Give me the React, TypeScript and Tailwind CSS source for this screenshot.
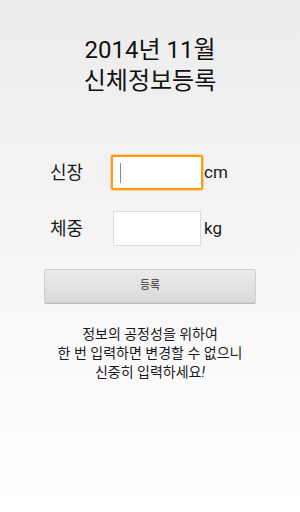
import { useState } from "react";

const font = { fontFamily: 'Roboto, "Noto Sans CJK KR", sans-serif' };

export default function App() {
  const [height, setHeight] = useState("");
  const [weight, setWeight] = useState("");

  return (
    <div
      className="w-[300px] h-[512px] overflow-hidden bg-gradient-to-b from-[#ececec] via-[#f6f6f6] to-white text-[#1a1a1a] flex flex-col items-center"
      style={font}
    >
      <div className="mt-[35px] text-center text-[24px] leading-[31px] text-[#111]">
        <p>2014년 11월</p>
        <p>신체정보등록</p>
      </div>

      <div className="mt-[58px] w-full pl-[50px] flex flex-col gap-[21px]">
        <div className="flex items-center h-[35px]">
          <span className="w-[61px] text-[18px]">신장</span>
          <div className="w-[92px] h-[35px] rounded-[2px] border-2 border-[#ff9a12] shadow-[0_0_0_1px_#ffd49a] bg-white flex items-center pl-[7px] gap-0">
            {/* static text cursor, as in the focused field */}
            {height === "" && <span className="w-px h-[20px] bg-[#8a8a8a] shrink-0" />}
            <input
              value={height}
              onChange={(e) => setHeight(e.target.value)}
              className="w-full outline-none bg-transparent text-[15px] caret-transparent"
            />
          </div>
          <span className="ml-px text-[17px]">cm</span>
        </div>
        <div className="flex items-center h-[35px]">
          <span className="w-[63px] text-[18px]">체중</span>
          <div className="w-[88px] h-[35px] border border-[#dcdcdc] bg-white flex items-center px-2">
            <input
              value={weight}
              onChange={(e) => setWeight(e.target.value)}
              className="w-full outline-none bg-transparent text-[15px]"
            />
          </div>
          <span className="ml-[3px] text-[17px]">kg</span>
        </div>
      </div>

      <button className="mt-[23px] w-[212px] h-[34px] rounded-[2px] bg-gradient-to-b from-[#ebebeb] to-[#d9d9d9] border border-[#d0d0d0] shadow-[0_1px_0_#b8b8b8] text-[11px] text-[#333]">
        등록
      </button>

      <div className="mt-[22px] text-center text-[14px] leading-[19px] text-[#1a1a1a]">
        <p>정보의 공정성을 위하여</p>
        <p>한 번 입력하면 변경할 수 없으니</p>
        <p>
          신중히 입력하세요<i>!</i>
        </p>
      </div>
    </div>
  );
}
